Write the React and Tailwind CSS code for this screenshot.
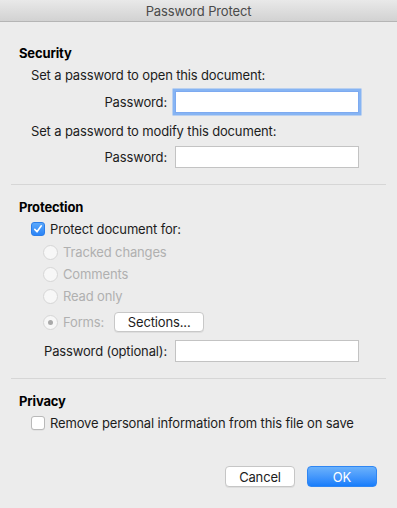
import React from "react";

const font = { fontFamily: "Inter, 'Liberation Sans', sans-serif" };

function Input({ focused }) {
  return (
    <div
      className={
        "w-[184px] h-[22px] bg-white " +
        (focused
          ? "border border-[#7daaf0] shadow-[0_0_0_2.5px_#86b4f3]"
          : "border border-[#c3c3c3]")
      }
    />
  );
}

function Radio({ dot }) {
  return (
    <div className="w-[15px] h-[15px] shrink-0 rounded-full border border-[#d6d6d6] bg-[#f7f7f7] flex items-center justify-center">
      {dot && <div className="w-[5px] h-[5px] rounded-full bg-[#a9a9a9]" />}
    </div>
  );
}

function Checkbox({ checked }) {
  if (checked) {
    return (
      <div className="w-[14px] h-[14px] shrink-0 rounded-[3px] bg-gradient-to-b from-[#5aa8fb] to-[#2a84f7] border border-[#2b7ee9] flex items-center justify-center">
        <svg width="10" height="10" viewBox="0 0 10 10">
          <path d="M1.8 5.4 L4 7.8 L8.3 1.8" fill="none" stroke="white" strokeWidth="1.6" strokeLinecap="round" strokeLinejoin="round" />
        </svg>
      </div>
    );
  }
  return <div className="w-[14px] h-[14px] shrink-0 rounded-[3px] bg-white border border-[#b9b9b9] shadow-[0_0.5px_0.5px_rgba(0,0,0,0.08)]" />;
}

export default function App() {
  return (
    <div
      className="w-[397px] h-[508px] bg-[#ececec] text-[13px] tracking-[-0.15px] text-[#1c1c1c] flex flex-col overflow-hidden whitespace-nowrap"
      style={font}
    >
      <div className="h-[22px] shrink-0 bg-gradient-to-b from-[#e9e9e9] to-[#d2d2d2] border-b border-[#b5b5b5] flex items-center justify-center text-[#4a4a4a] leading-[16px]">
        Password Protect
      </div>

      <div className="flex flex-col">
        <div className="mt-[23px] ml-[19px] h-[16px] leading-[16px] font-bold text-black">Security</div>
        <div className="mt-[6px] ml-[31px] h-[16px] leading-[16px]">Set a password to open this document:</div>
        <div className="mt-[8px] flex items-center h-[22px]">
          <div className="w-[167px] text-right leading-[16px]">Password:</div>
          <div className="ml-[8px]">
            <Input focused />
          </div>
        </div>
        <div className="mt-[10px] ml-[31px] h-[16px] leading-[16px]">Set a password to modify this document:</div>
        <div className="mt-[7px] flex items-center h-[22px]">
          <div className="w-[167px] text-right leading-[16px]">Password:</div>
          <div className="ml-[8px]">
            <Input />
          </div>
        </div>

        <div className="mt-[16px] mx-[11px] h-px bg-[#d6d6d6]" />

        <div className="mt-[14px] ml-[19px] h-[16px] leading-[16px] font-bold text-black">Protection</div>
        <div className="mt-[6px] ml-[31px] h-[16px] flex items-center gap-[5px]">
          <Checkbox checked />
          <span className="leading-[16px]">Protect document for:</span>
        </div>
        <div className="mt-[4px] ml-[43px] flex flex-col text-[#b0b0b0]">
          {["Tracked changes", "Comments", "Read only"].map((t) => (
            <div key={t} className="h-[22px] flex items-center gap-[5px]">
              <Radio />
              <span className="leading-[16px]">{t}</span>
            </div>
          ))}
          <div className="mt-[4px] h-[22px] flex items-center">
            <Radio dot />
            <span className="ml-[5px] leading-[16px]">Forms:</span>
            <div className="ml-[10px] w-[90px] h-[20px] rounded-[4px] bg-white border border-[#c8c8c8] shadow-[0_1px_0_rgba(0,0,0,0.06)] flex items-center justify-center text-[#1c1c1c] leading-[16px]">
              Sections...
            </div>
          </div>
        </div>
        <div className="mt-[7px] flex items-center h-[22px]">
          <div className="ml-[44px] w-[123px] leading-[16px]">Password (optional):</div>
          <div className="ml-[8px]">
            <Input />
          </div>
        </div>

        <div className="mt-[16px] mx-[11px] h-px bg-[#d6d6d6]" />

        <div className="mt-[14px] ml-[19px] h-[16px] leading-[16px] font-bold text-black">Privacy</div>
        <div className="mt-[6px] ml-[31px] h-[16px] flex items-center gap-[5px]">
          <Checkbox />
          <span className="leading-[16px]">Remove personal information from this file on save</span>
        </div>

        <div className="mt-[35px] flex justify-end gap-[12px] pr-[20px]">
          <div className="w-[70px] h-[21px] rounded-[4px] bg-white border border-[#c6c6c6] shadow-[0_1px_0_rgba(0,0,0,0.06)] flex items-center justify-center leading-[16px]">
            Cancel
          </div>
          <div className="w-[70px] h-[21px] rounded-[4px] bg-gradient-to-b from-[#6ab1fb] to-[#167dfb] border border-[#2f86f3] flex items-center justify-center text-white leading-[16px]">
            OK
          </div>
        </div>
      </div>
    </div>
  );
}
